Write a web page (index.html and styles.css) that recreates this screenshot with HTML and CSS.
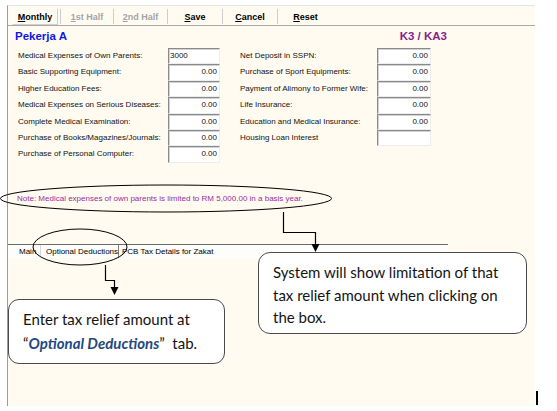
FILE: index.html
```html
<!DOCTYPE html>
<html>
<head>
<meta charset="utf-8">
<link rel="stylesheet" href="styles.css">
</head>
<body>
<div class="app">
  <div class="toolbar">
    <div class="tb-btn active w-monthly"><span><u>M</u>onthly</span></div>
    <div class="tb-btn disabled w-1st"><span><u>1</u>st Half</span></div>
    <div class="tb-btn disabled w-2nd"><span><u>2</u>nd Half</span></div>
    <div class="tb-btn w-save"><span><u>S</u>ave</span></div>
    <div class="tb-btn w-cancel"><span><u>C</u>ancel</span></div>
    <div class="tb-btn w-reset"><span><u>R</u>eset</span></div>
  </div>
  <div class="header">
    <span class="emp">Pekerja A</span>
    <span class="code">K3 / KA3</span>
  </div>
  <div class="form">
    <div class="col col-left">
      <div class="row"><span class="lbl">Medical Expenses of Own Parents:</span><span class="box left-text">3000</span></div>
      <div class="row"><span class="lbl">Basic Supporting Equipment:</span><span class="box">0.00</span></div>
      <div class="row"><span class="lbl">Higher Education Fees:</span><span class="box">0.00</span></div>
      <div class="row"><span class="lbl">Medical Expenses on Serious Diseases:</span><span class="box">0.00</span></div>
      <div class="row"><span class="lbl">Complete Medical Examination:</span><span class="box">0.00</span></div>
      <div class="row"><span class="lbl">Purchase of Books/Magazines/Journals:</span><span class="box">0.00</span></div>
      <div class="row"><span class="lbl">Purchase of Personal Computer:</span><span class="box">0.00</span></div>
    </div>
    <div class="col col-right">
      <div class="row"><span class="lbl">Net Deposit in SSPN:</span><span class="box">0.00</span></div>
      <div class="row"><span class="lbl">Purchase of Sport Equipments:</span><span class="box">0.00</span></div>
      <div class="row"><span class="lbl">Payment of Alimony to Former Wife:</span><span class="box">0.00</span></div>
      <div class="row"><span class="lbl">Life Insurance:</span><span class="box">0.00</span></div>
      <div class="row"><span class="lbl">Education and Medical Insurance:</span><span class="box">0.00</span></div>
      <div class="row"><span class="lbl">Housing Loan Interest</span><span class="box"></span></div>
    </div>
  </div>
  <div class="note">Note: Medical expenses of own parents is limited to RM 5,000.00 in a basis year.</div>
  <div class="tabs">
    <span class="tab tab-main">Main</span>
    <span class="tab tab-sel">Optional Deductions</span>
    <span class="tab tab-pcb">PCB Tax Details for Zakat</span>
  </div>
</div>

<svg class="overlay" width="557" height="411" viewBox="0 0 557 411">
  <ellipse cx="166" cy="198.5" rx="165.5" ry="13.5" fill="none" stroke="#000" stroke-width="1"/>
  <polyline points="283.5,212 283.5,232.5 315.5,232.5 315.5,245" fill="none" stroke="#000" stroke-width="1.2"/>
  <polygon points="311.5,244 319.5,244 315.5,252" fill="#000"/>
  <ellipse cx="80" cy="247" rx="47" ry="18" fill="none" stroke="#000" stroke-width="1"/>
  <polyline points="105.5,265 105.5,280.5 114.5,280.5 114.5,288" fill="none" stroke="#000" stroke-width="1.2"/>
  <polygon points="110.5,287 118.5,287 114.5,295" fill="#000"/>
</svg>

<div class="callout callout-left">
  <p>Enter tax relief amount at</p>
  <p>“<b class="hl">Optional Deductions</b>”&nbsp; tab.</p>
</div>
<div class="callout callout-right">
  <p>System will show limitation of that</p>
  <p>tax relief amount when clicking on</p>
  <p>the box.</p>
</div>
<div class="cursor"></div>
</body>
</html>
```

FILE: styles.css
```css
* { box-sizing: border-box; }
html, body { margin: 0; padding: 0; background: #ffffff; }
body {
  width: 557px;
  height: 411px;
  position: relative;
  overflow: hidden;
  font-family: "Liberation Sans", Arial, sans-serif;
  color: #000;
}

.app {
  margin: 5px 0 0 7px;
  width: 528px;
  height: 401px;
  background: #fffbf0;
  border-left: 1px solid #9c9c9c;
  border-top: 1px solid #e4e4e4;
  display: flex;
  flex-direction: column;
}

/* toolbar */
.toolbar {
  display: flex;
  height: 20px;
  padding-top: 2px;
  border-bottom: 1px solid #a8a8a8;
}
.tb-btn {
  display: flex;
  align-items: center;
  justify-content: center;
  font-size: 9px;
  font-weight: bold;
  margin: 1px 0;
  border-left: 1px solid #cdcdcd;
}
.tb-btn u { text-decoration-thickness: 1px; text-underline-offset: 1px; }
.tb-btn.active {
  border: 1px solid;
  border-color: #ffffff #cfcfcf #cfcfcf #ffffff;
  margin: 0 2px 0 4px;
}
.tb-btn.disabled { color: #a3a3a3; text-shadow: 1px 1px 0 #ffffff; }
.w-monthly { width: 46px; }
.w-1st { width: 53px; }
.w-2nd { width: 54px; }
.w-save { width: 55px; }
.w-cancel { width: 55px; }
.w-reset { width: 56px; }

/* header */
.header {
  display: flex;
  align-items: flex-start;
  justify-content: space-between;
  height: 22px;
  padding: 0 88px 0 7px;
  font-weight: bold;
  font-size: 11.5px;
  line-height: 20px;
}
.emp { color: #0d17e8; }
.code { color: #8a1c8c; }

/* form */
.form {
  display: flex;
  padding-left: 10px;
  font-size: 8px;
}
.col { display: flex; flex-direction: column; }
.col-left .lbl { width: 150px; }
.col-left .box { width: 52px; }
.col-right { margin-left: 20px; }
.col-right .lbl { width: 137px; }
.col-right .box { width: 54px; }
.row {
  display: flex;
  height: 16.4px;
  line-height: 16.4px;
}
.lbl { white-space: nowrap; color: #111; }
.box {
  height: 16.4px;
  line-height: 14.4px;
  background: #ffffff;
  border-top: 1px solid #8a8a8a;
  border-left: 1px solid #8a8a8a;
  border-right: 1px solid #ededed;
  border-bottom: 1px solid #ededed;
  box-shadow: inset 1px 1px 0 #d2d2d2;
  text-align: right;
  padding: 0 2px 0 2px;
  color: #111;
}
.box.left-text { text-align: left; padding-left: 1px; }

/* note */
.note {
  margin-top: 30px;
  padding-left: 9px;
  font-size: 8px;
  line-height: 12px;
  color: #9a2c9a;
  white-space: nowrap;
}

/* tabs */
.tabs {
  margin-top: 39px;
  width: 440px;
  height: 14px;
  border-top: 1px solid #6a6a6a;
  background: #fdfdfb;
  display: flex;
  font-size: 8px;
  line-height: 13px;
}
.tab { white-space: nowrap; }
.tab-main { padding-left: 11px; width: 32px; }
.tab-sel {
  width: 79px;
  padding-left: 5px;
  border-left: 1px solid #d8d8d8;
  border-right: 1px solid #7a7a7a;
  height: 12px;
}
.tab-pcb { padding-left: 3px; }

/* annotation overlay */
.overlay {
  position: absolute;
  left: 0;
  top: 0;
  pointer-events: none;
}

.callout {
  position: absolute;
  background: #ffffff;
  border: 1.5px solid #4a4a4a;
  font-family: Lato, "Open Sans", sans-serif;
  font-size: 15px;
  color: #141414;
}
.callout p { margin: 0; white-space: nowrap; }
.callout-left {
  left: 8px;
  top: 299px;
  width: 217px;
  height: 65px;
  border-radius: 11px;
  padding: 7px 0 0 14px;
  line-height: 24px;
}
.callout-right {
  left: 258px;
  top: 252px;
  width: 269px;
  height: 82px;
  border-radius: 12px;
  padding: 8px 0 0 14px;
  line-height: 22.5px;
}
.hl { color: #1f4a7e; font-style: italic; font-weight: bold; }

.cursor {
  position: absolute;
  left: 536px;
  top: 391px;
  width: 2px;
  height: 14px;
  background: #000;
}
```
